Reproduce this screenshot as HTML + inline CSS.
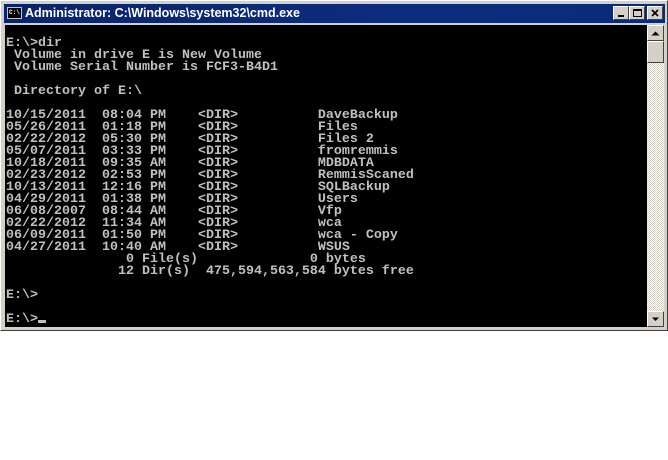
<!DOCTYPE html>
<html><head><meta charset="utf-8"><style>
*{margin:0;padding:0;box-sizing:border-box}
body{width:668px;height:460px;background:#fff;position:relative;overflow:hidden;font-family:"Liberation Sans",sans-serif}
#win{position:absolute;left:0;top:0;width:668px;height:331px;background:#d4d0c8;border:1px solid #fff;border-right-color:#404040;border-bottom-color:#404040}
#title{position:absolute;left:3px;top:3px;width:661px;height:19px;background:linear-gradient(90deg,#0a246a,#0c2c80 60%,#0a2a7a)}
#title .t{position:absolute;left:21px;top:2px;color:#fff;font:bold 12.5px "Liberation Sans",sans-serif;white-space:nowrap}
#icon{position:absolute;left:3px;top:3px;width:15px;height:12px;background:#000;border:1px solid #c0c0c0;color:#fff;font:bold 6px "Liberation Mono",monospace;line-height:10px;padding-left:1px}
.btn{position:absolute;top:2px;width:16px;height:14px;background:#d4d0c8;border:1px solid #fff;border-right-color:#404040;border-bottom-color:#404040}
#con{position:absolute;left:4px;top:24px;width:642px;height:302px;background:#000;overflow:hidden}
pre{position:absolute;left:1px;top:13px;color:#c0c0c0;font:bold 13.33px/12px "Liberation Mono",monospace;white-space:pre}
#sb{position:absolute;left:646px;top:24px;width:17px;height:302px;background-color:#f0f0f0;background-image:repeating-conic-gradient(#fff 0 25%,#d4d0c8 0 50%);background-size:2px 2px}
.sbb{position:absolute;left:0;width:17px;background:#d4d0c8;border:1px solid #fff;border-right-color:#404040;border-bottom-color:#404040}
.cur{display:inline-block;width:8px;height:3px;background:#c0c0c0;vertical-align:-1px}
</style></head><body>
<div id="win">
<div id="title"><div id="icon">C:\</div><div class="t">Administrator: C:\Windows\system32\cmd.exe</div>
<div class="btn" style="left:609px"><div style="position:absolute;left:4px;top:8px;width:6px;height:2px;background:#000"></div></div>
<div class="btn" style="left:625px"><div style="position:absolute;left:3px;top:2px;width:9px;height:8px;border:1px solid #000;border-top-width:2px"></div></div>
<div class="btn" style="left:643px"><svg width="14" height="12" style="position:absolute;left:0;top:0"><path d="M4 3L10 9M10 3L4 9" stroke="#000" stroke-width="1.6"/></svg></div>
</div>
<div id="con"><pre>E:\&gt;dir
 Volume in drive E is New Volume
 Volume Serial Number is FCF3-B4D1

 Directory of E:\

10/15/2011  08:04 PM    &lt;DIR&gt;          DaveBackup
05/26/2011  01:18 PM    &lt;DIR&gt;          Files
02/22/2012  05:30 PM    &lt;DIR&gt;          Files 2
05/07/2011  03:33 PM    &lt;DIR&gt;          fromremmis
10/18/2011  09:35 AM    &lt;DIR&gt;          MDBDATA
02/23/2012  02:53 PM    &lt;DIR&gt;          RemmisScaned
10/13/2011  12:16 PM    &lt;DIR&gt;          SQLBackup
04/29/2011  01:38 PM    &lt;DIR&gt;          Users
06/08/2007  08:44 AM    &lt;DIR&gt;          Vfp
02/22/2012  11:34 AM    &lt;DIR&gt;          wca
06/09/2011  01:50 PM    &lt;DIR&gt;          wca - Copy
04/27/2011  10:40 AM    &lt;DIR&gt;          WSUS
               0 File(s)              0 bytes
              12 Dir(s)  475,594,563,584 bytes free

E:\&gt;

E:\&gt;<span class="cur"></span></pre></div>
<div id="sb">
<div class="sbb" style="top:0;height:16px"><svg width="15" height="14" style="position:absolute;left:0;top:0"><path d="M3.5 9.5L7.5 5.5L11.5 9.5Z" fill="#000"/></svg></div>
<div class="sbb" style="top:16px;height:22px"></div>
<div class="sbb" style="top:286px;height:16px"><svg width="15" height="14" style="position:absolute;left:0;top:0"><path d="M4 5.5L11 5.5L7.5 9Z" fill="#000"/></svg></div>
</div>
</div>
</body></html>
